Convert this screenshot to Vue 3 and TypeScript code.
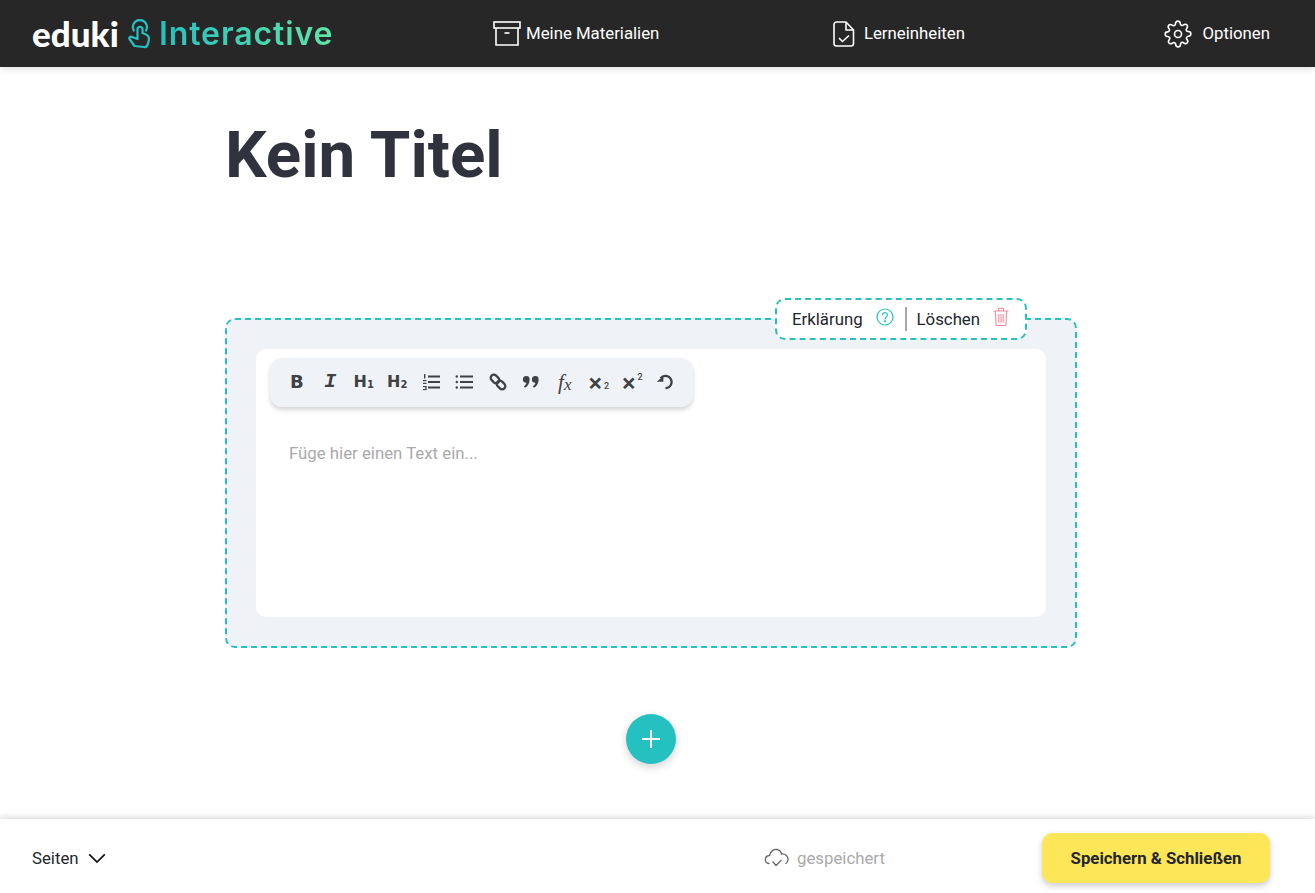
<script setup lang="ts">
interface Tool { id: string; label?: string; cls?: string }
const tools: Tool[] = [
  { id: 'b', label: 'B', cls: 'bold' },
  { id: 'i', label: 'I', cls: 'ital' },
  { id: 'h1', label: 'H', cls: 'head' },
  { id: 'h2', label: 'H', cls: 'head' },
  { id: 'ol' }, { id: 'ul' }, { id: 'link' }, { id: 'quote' },
  { id: 'fx', label: 'f', cls: 'fx' },
  { id: 'sub', label: '×', cls: 'cross' },
  { id: 'sup', label: '×', cls: 'cross' },
  { id: 'undo' },
]
</script>

<template>
  <div class="page">
    <header class="topbar">
      <div class="brand">
        <span class="eduki">eduki</span>
        <svg class="hand" width="22" height="30" viewBox="0 0 22 30" fill="none" stroke="#25c0c0" stroke-width="2.200" stroke-linejoin="round" stroke-linecap="round">
          <path d="M5.800 11.500A7 7 0 1 1 18 11.500" />
          <path d="M9.500 9.500a2.700 2.700 0 0 1 5 0v4.500c2.800 1 6 2.200 6.300 4.500.3 2.500-.3 5-1.300 7.500-.7 1.700-2 2.200-3.500 2L6.500 27 1.500 20c-.7-1.300.7-2.700 2-2.200l6 2.200z" />
        </svg>
        <span class="interactive">Interactive</span>
      </div>
      <nav class="nav">
        <a class="nav-item first">
          <svg width="28" height="25" viewBox="0 0 28 25" fill="none" stroke="#fff" stroke-width="1.600"><rect x="1" y="1" width="26" height="6" /><path d="M3 7v17h22V7" /><path d="M11.500 12h5" /></svg>
          <span>Meine Materialien</span>
        </a>
        <a class="nav-item second">
          <svg width="22" height="26" viewBox="0 0 22 26" fill="none" stroke="#fff" stroke-width="1.600" stroke-linejoin="round"><path d="M3.500 1H13l7.500 8v13.500a2.500 2.500 0 0 1-2.500 2.500H3.500A2.500 2.500 0 0 1 1 22.500V3.500A2.500 2.500 0 0 1 3.500 1z" /><path d="M13 1v8h7.500" /><path d="M6 17l3.500 3.500L16 14.500" /></svg>
          <span>Lerneinheiten</span>
        </a>
        <a class="nav-item third">
          <svg width="28" height="28" viewBox="0 0 24 24" fill="none" stroke="#fff" stroke-width="1.400" stroke-linejoin="round"><circle cx="12" cy="12" r="3" /><path d="M19.400 15a1.650 1.650 0 0 0 .330 1.820l.060.060a2 2 0 1 1-2.830 2.830l-.060-.060a1.650 1.650 0 0 0-2.800 1.170V21a2 2 0 1 1-4 0v-.090A1.650 1.650 0 0 0 7.300 19.760l-.060.060a2 2 0 1 1-2.830-2.830l.060-.060a1.650 1.650 0 0 0-1.170-2.800H3a2 2 0 1 1 0-4h.090A1.650 1.650 0 0 0 4.240 7.300l-.060-.060a2 2 0 1 1 2.830-2.830l.060.060a1.650 1.650 0 0 0 2.800-1.170V3a2 2 0 1 1 4 0v.090a1.650 1.650 0 0 0 2.800 1.170l.060-.060a2 2 0 1 1 2.830 2.830l-.060.060a1.650 1.650 0 0 0 1.170 2.800H21a2 2 0 1 1 0 4h-.090a1.650 1.650 0 0 0-1.510 1z" /></svg>
          <span>Optionen</span>
        </a>
      </nav>
    </header>

    <main class="content">
      <h1 class="title">Kein Titel</h1>

      <section class="block">
        <div class="block-actions">
          <span class="action-label">Erklärung</span>
          <svg class="help" width="18" height="18" viewBox="0 0 18 18" fill="none" stroke="#25c0c0" stroke-width="1.200"><circle cx="9" cy="9" r="8" /><path d="M6.600 7a2.400 2.400 0 1 1 3.600 2.100c-.8.500-1.200 1-1.200 2" stroke-linecap="round" /><circle cx="9" cy="13.300" r=".5" /></svg>
          <span class="divider"></span>
          <span class="action-label">Löschen</span>
          <svg class="trash" width="16" height="20" viewBox="0 0 16 20" fill="none" stroke="#f9899c" stroke-width="1.100" stroke-linejoin="round"><path d="M.5 4h15M5.500 4V1.500h5V4M2.300 4l.8 14.500h9.800L13.700 4M5.800 7v8.500M8 7v8.500M10.200 7v8.500" /></svg>
        </div>

        <div class="editor">
          <div class="toolbar">
            <button v-for="tool in tools" :key="tool.id" class="tool" type="button">
              <span v-if="tool.label" :class="tool.cls">{{ tool.label }}</span>
              <sub v-if="tool.id === 'h1'" class="h-num">1</sub>
              <sub v-if="tool.id === 'h2'" class="h-num">2</sub>
              <sub v-if="tool.id === 'fx'" class="fx-x">x</sub>
              <sub v-if="tool.id === 'sub'" class="small-num low">2</sub>
              <sup v-if="tool.id === 'sup'" class="small-num high">2</sup>
              <svg v-if="tool.id === 'ol'" width="18" height="18" viewBox="0 0 18 18" fill="#3f4144"><rect x="6" y="2.500" width="12" height="2" /><rect x="6" y="8" width="12" height="2" /><rect x="6" y="13.500" width="12" height="2" /><rect x="2" y="1" width="1.400" height="4.500" /><rect x="1" y="7" width="3.500" height="1.200" /><rect x="1" y="9.800" width="3.500" height="1.200" /><rect x="1" y="13" width="3.500" height="1.100" /><rect x="1" y="16" width="3.500" height="1.100" /><rect x="3.300" y="13" width="1.200" height="4" /></svg>
              <svg v-if="tool.id === 'ul'" width="18" height="18" viewBox="0 0 18 18" fill="#3f4144"><rect x="5" y="2.500" width="13" height="2" /><rect x="5" y="8" width="13" height="2" /><rect x="5" y="13.500" width="13" height="2" /><circle cx="1.800" cy="3.500" r="1.200" /><circle cx="1.800" cy="9" r="1.200" /><circle cx="1.800" cy="14.500" r="1.200" /></svg>
              <svg v-if="tool.id === 'link'" width="18" height="18" viewBox="0 0 18 18" fill="none" stroke="#3f4144" stroke-width="2.200"><rect x="1.200" y="2.800" width="9.600" height="6.400" rx="3.200" transform="rotate(45 6 6)" /><rect x="7.200" y="8.800" width="9.600" height="6.400" rx="3.200" transform="rotate(45 12 12)" /></svg>
              <svg v-if="tool.id === 'quote'" width="18" height="18" viewBox="0 0 18 18" fill="#3f4144"><path d="M4.200 3a3.300 3.300 0 0 1 3.400 3.400c0 3.800-1.800 7-4.700 8.400l-1-1.400c1.400-1 2.300-2.300 2.500-3.600A3.300 3.300 0 0 1 4.200 3zM13.200 3a3.300 3.300 0 0 1 3.400 3.400c0 3.800-1.800 7-4.700 8.400l-1-1.400c1.400-1 2.300-2.300 2.500-3.600A3.300 3.300 0 0 1 13.200 3z" /></svg>
              <svg v-if="tool.id === 'undo'" width="18" height="18" viewBox="0 0 18 18" fill="none" stroke="#3f4144" stroke-width="2.200"><path d="M4.500 5.200A6.200 6.200 0 1 1 9.500 15.200" /><path d="M.8 8.800h6.600V3z" fill="#3f4144" stroke="none" /></svg>
            </button>
          </div>
          <p class="placeholder">Füge hier einen Text ein...</p>
        </div>
      </section>

      <button class="add" type="button" aria-label="Hinzufügen">
        <svg width="20" height="20" viewBox="0 0 20 20" stroke="#fff" stroke-width="2"><path d="M10 1v18M1 10h18" /></svg>
      </button>
    </main>

    <footer class="bottombar">
      <div class="pages">
        <span>Seiten</span>
        <svg width="18" height="11" viewBox="0 0 18 11" fill="none" stroke="#111" stroke-width="1.700"><path d="M1.200 1.300L9 9l7.800-7.700" /></svg>
      </div>
      <div class="saved">
        <svg width="25" height="20" viewBox="0 0 25 20" fill="none" stroke="#666" stroke-width="1.300" stroke-linecap="round" stroke-linejoin="round"><path d="M5 15.500c-5 -.5-5-7.500 .5-8C6.500 3 10 1 13 1.500c2.500.5 4 2 4.500 4.500 4-.5 7 2.500 6.500 6-.2 1.500-1 2.800-2 3.500" /><path d="M9 14l3 3.500 5-5" /></svg>
        <span>gespeichert</span>
      </div>
      <button class="save" type="button">Speichern &amp; Schließen</button>
    </footer>
  </div>
</template>

<style>
html, body { margin: 0; background: #fff; }
</style>

<style scoped>
.page {
  width: 1315px;
  height: 893px;
  display: flex;
  flex-direction: column;
  overflow: hidden;
  font-family: Roboto, "Liberation Sans", sans-serif;
  color: #23262e;
}
.topbar {
  flex: 0 0 67px;
  background: #272727;
  display: flex;
  align-items: center;
  padding: 0 45px 0 32px;
  box-shadow: 0 2px 6px rgba(0, 0, 0, 0.12);
  position: relative;
}
.brand {
  display: flex;
  align-items: center;
  width: 461px;
  flex: none;
}
.eduki {
  font-family: Lato, sans-serif;
  font-weight: 900;
  font-size: 35px;
  line-height: 40px;
  color: #fff;
  width: 96px;
  margin-top: -1px;
}
.hand { flex: none; }
.interactive {
  margin-left: 9px;
  font-family: Inter, sans-serif;
  font-weight: 600;
  font-size: 32px;
  line-height: 40px;
  letter-spacing: 0.9px;
  background: linear-gradient(90deg, #25c0c0, #62e4a8);
  -webkit-background-clip: text;
  background-clip: text;
  color: transparent;
}
.nav {
  flex: 1;
  display: flex;
  align-items: center;
  justify-content: space-between;
}
.nav-item {
  display: flex;
  align-items: center;
  color: #fff;
  font-size: 16.800px;
  line-height: 24px;
  gap: 5px;
}
.nav-item span { margin-bottom: 2px; }
.nav-item.second { gap: 9px; margin-right: 26px; }
.nav-item.third { gap: 10px; }
.content {
  flex: 1;
  display: flex;
  flex-direction: column;
  width: 852px;
  margin-left: 225px;
  min-height: 0;
}
.title {
  margin: 50px 0 0;
  font-size: 65.500px;
  line-height: 76px;
  font-weight: 700;
  color: #30333d;
  height: 76px;
}
.block {
  position: relative;
  box-sizing: border-box;
  margin-top: 125px;
  height: 330px;
  padding: 28px 29px;
  background: #eff3f8;
  border: 2px dashed #25c0c0;
  border-radius: 10px;
}
.block-actions {
  position: absolute;
  top: -22px;
  right: 48px;
  box-sizing: border-box;
  width: 252px;
  height: 42px;
  padding: 0 15px;
  display: flex;
  align-items: center;
  background: #fff;
  border: 2px dashed #25c0c0;
  border-radius: 10px;
  font-size: 16.800px;
}
.action-label { line-height: 20px; color: #23262e; }
.help { margin-left: 13px; margin-top: -4px; }
.divider { width: 2px; height: 24px; background: #a8a8a8; margin: 0 10px 0 11px; }
.trash { margin-left: 13px; margin-top: -4px; }
.editor {
  height: 268px;
  margin-top: 1px;
  background: #fff;
  border-radius: 10px;
  padding: 9px 14px;
  box-sizing: border-box;
}
.toolbar {
  width: 423px;
  height: 49px;
  box-sizing: border-box;
  padding: 0 10px 2px;
  display: flex;
  align-items: center;
  background: #eff3f8;
  border-radius: 12px;
  box-shadow: 0 3px 4px rgba(0, 0, 0, 0.16);
}
.tool {
  flex: 0 0 33.500px;
  height: 30px;
  padding: 0;
  border: 0;
  background: none;
  display: flex;
  align-items: center;
  justify-content: center;
  color: #3f4144;
  font-family: Roboto, sans-serif;
}
.bold { font-family: "DejaVu Sans", sans-serif; font-size: 18px; font-weight: 700; line-height: 18px; }
.ital { font-family: "Liberation Mono", monospace; font-size: 20px; font-style: italic; font-weight: 700; line-height: 18px; }
.head { font-family: "DejaVu Sans", sans-serif; font-size: 16px; font-weight: 700; line-height: 18px; }
.h-num { font-family: "DejaVu Sans", sans-serif; font-size: 10px; font-weight: 700; line-height: 11px; vertical-align: baseline; margin-top: 6px; }
.fx { font-family: "Liberation Serif", serif; font-style: italic; font-size: 21px; line-height: 20px; }
.fx-x { font-family: "Liberation Serif", serif; font-style: italic; font-size: 17px; line-height: 14px; margin-top: 7px; }
.cross { font-family: Inter, sans-serif; font-size: 23px; font-weight: 600; line-height: 18px; }
.small-num { font-size: 9px; line-height: 9px; font-weight: 500; }
.small-num.low { margin-top: 9px; margin-left: 1px; }
.small-num.high { margin-top: -9px; margin-left: 1px; }
.placeholder {
  margin: 36px 0 0 19px;
  font-size: 16.800px;
  line-height: 20px;
  color: #aaaaaa;
}
.add {
  align-self: flex-start;
  margin: 66px 0 0 401px;
  width: 50px;
  height: 50px;
  border: 0;
  padding: 0;
  border-radius: 50%;
  background: #25c0c0;
  display: flex;
  align-items: center;
  justify-content: center;
  box-shadow: 0 3px 8px rgba(0, 0, 0, 0.18);
}
.bottombar {
  flex: 0 0 74px;
  box-sizing: border-box;
  background: #fff;
  display: flex;
  align-items: center;
  padding: 4px 45px 0 32px;
  box-shadow: 0 -2px 6px rgba(0, 0, 0, 0.14);
  position: relative;
}
.pages {
  display: flex;
  align-items: center;
  gap: 9px;
  font-size: 16.800px;
  width: 732px;
}
.saved {
  display: flex;
  align-items: center;
  gap: 8px;
  font-size: 16.800px;
  color: #aaaaaa;
  width: 278px;
}
.save {
  width: 228px;
  height: 50px;
  border: 0;
  border-radius: 10px;
  background: #fde658;
  color: #23262e;
  font-family: Roboto, sans-serif;
  font-weight: 700;
  font-size: 16.800px;
  box-shadow: 0 3px 6px rgba(0, 0, 0, 0.2);
}
</style>
